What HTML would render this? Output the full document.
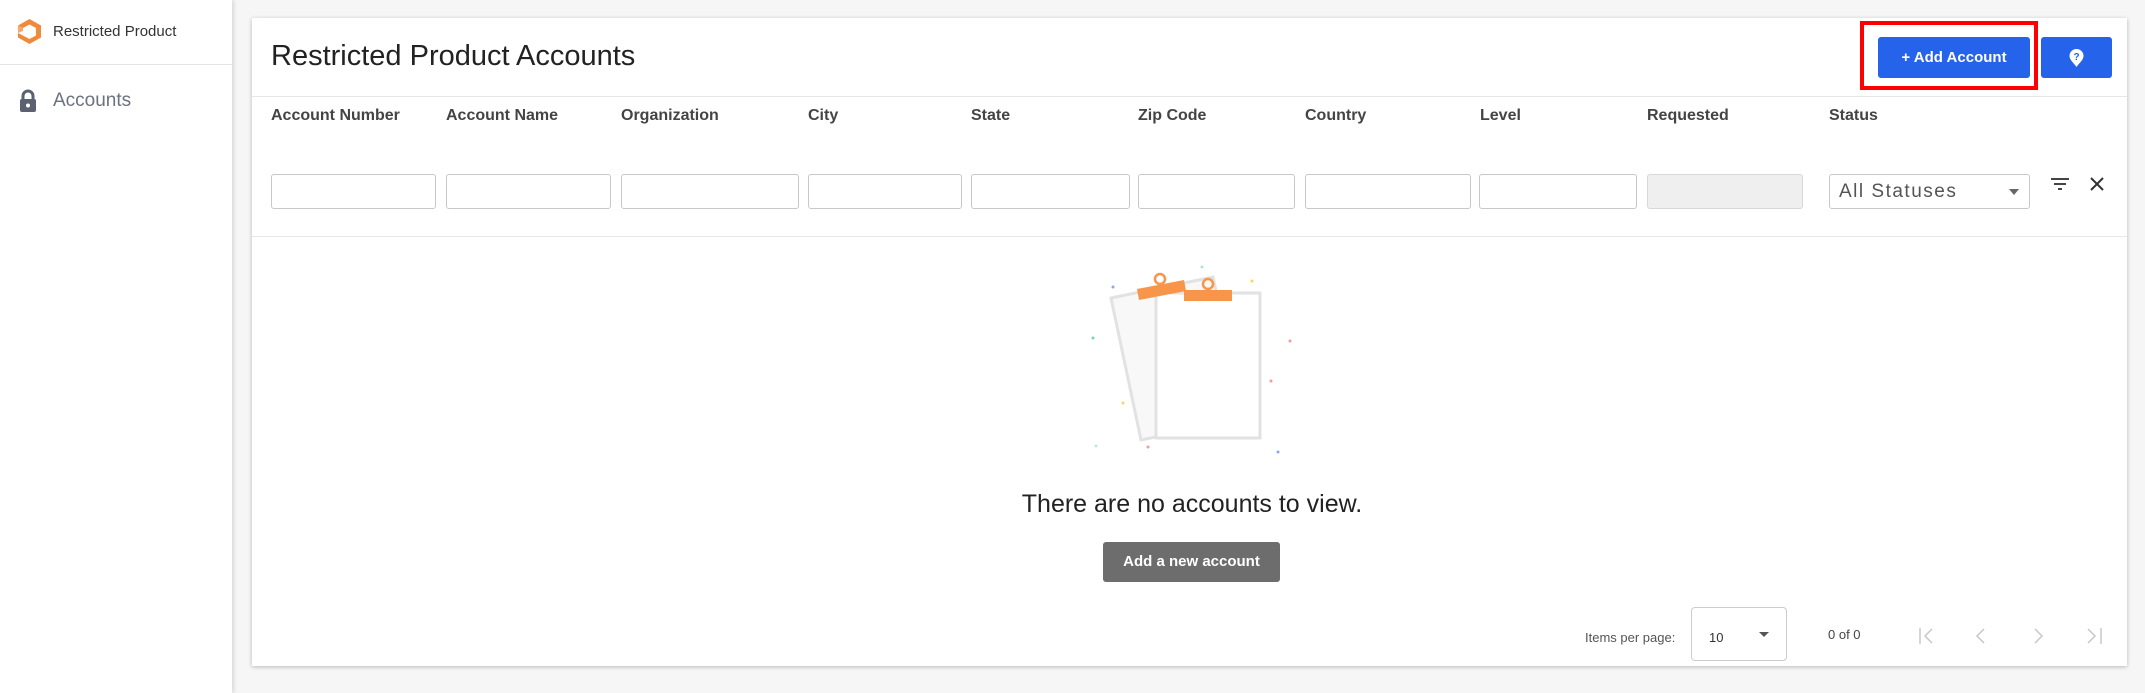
<!DOCTYPE html>
<html><head><meta charset="utf-8"><style>
*{box-sizing:border-box;margin:0;padding:0}
body{width:2145px;height:693px;background:#f6f6f6;font-family:"Liberation Sans",sans-serif;position:relative;overflow:hidden}
.abs{position:absolute}
.side{left:0;top:0;width:232px;height:693px;background:#fff;box-shadow:2px 0 4px rgba(0,0,0,.12)}
.card{left:252px;top:18px;width:1875px;height:648px;background:#fff;box-shadow:0 1px 4px rgba(0,0,0,.25)}
.lbl{font-size:16px;font-weight:bold;color:#444;top:107px}
.inp{top:174px;height:35px;border:1px solid #c8c8c8;border-radius:3px;background:#fff}
</style></head><body>
<div class="abs side">
  <svg class="abs" style="left:16px;top:18px" width="27" height="27" viewBox="0 0 27 27"><path d="M13.5 1 L25 7.5 L25 19.5 L13.5 26 L2 19.5 L2 15 L13.5 21 L20 17.5 L20 10 L13.5 6.5 L7 10 L2 7.5 Z" fill="#f08a3a"/><path d="M2 7.5 L7 10 L7 13 L2 15Z" fill="#f6a868"/></svg>
  <div class="abs" style="left:53px;top:23px;font-size:15px;color:#333">Restricted Product</div>
  <div class="abs" style="left:0;top:64px;width:232px;height:1px;background:#e4e4e4"></div>
  <svg class="abs" style="left:18px;top:89px" width="20" height="24" viewBox="0 0 20 24"><path d="M5 11V7a5 5 0 0 1 10 0v4" stroke="#5b6170" stroke-width="3" fill="none"/><rect x="2" y="10" width="16" height="13" rx="2" fill="#5b6170"/><circle cx="10" cy="16.5" r="2" fill="#fff"/></svg>
  <div class="abs" style="left:53px;top:90px;font-size:19px;color:#6b7280">Accounts</div>
</div>
<div class="abs card"></div>
<div class="abs" style="left:271px;top:40px;font-size:29px;color:#222">Restricted Product Accounts</div>
<div class="abs" style="left:1860px;top:21px;width:178px;height:69px;border:4px solid #f00"></div>
<div class="abs" style="left:1878px;top:37px;width:152px;height:41px;background:#2563eb;border-radius:3px;color:#fff;font-size:15px;font-weight:bold;text-align:center;line-height:41px">+ Add Account</div>
<div class="abs" style="left:2041px;top:37px;width:71px;height:41px;background:#2563eb;border-radius:3px"><svg class="abs" style="left:28px;top:12px" width="15" height="18" viewBox="0 0 15 18"><path d="M7.5 0a7 7 0 0 1 7 7c0 4-4 6.5-7 11C4.5 13.5.5 11 .5 7a7 7 0 0 1 7-7z" fill="#fff"/><text x="7.5" y="11" font-size="10" font-weight="bold" text-anchor="middle" fill="#2563eb" font-family="Liberation Sans">?</text></svg></div>
<div class="abs" style="left:252px;top:96px;width:1875px;height:1px;background:#e6e6e6"></div>
<div class="abs lbl" style="left:271px">Account Number</div>
<div class="abs lbl" style="left:446px">Account Name</div>
<div class="abs lbl" style="left:621px">Organization</div>
<div class="abs lbl" style="left:808px">City</div>
<div class="abs lbl" style="left:971px">State</div>
<div class="abs lbl" style="left:1138px">Zip Code</div>
<div class="abs lbl" style="left:1305px">Country</div>
<div class="abs lbl" style="left:1480px">Level</div>
<div class="abs lbl" style="left:1647px">Requested</div>
<div class="abs lbl" style="left:1829px">Status</div>
<div class="abs inp" style="left:271px;width:165px"></div>
<div class="abs inp" style="left:446px;width:165px"></div>
<div class="abs inp" style="left:621px;width:178px"></div>
<div class="abs inp" style="left:808px;width:154px"></div>
<div class="abs inp" style="left:971px;width:159px"></div>
<div class="abs inp" style="left:1138px;width:157px"></div>
<div class="abs inp" style="left:1305px;width:166px"></div>
<div class="abs inp" style="left:1479px;width:158px"></div>
<div class="abs inp" style="left:1647px;width:156px;background:#efefef;border-color:#d8d8d8"></div>
<div class="abs inp" style="left:1829px;width:201px;font-size:19px;letter-spacing:1.5px;color:#555;padding-left:9px;line-height:33px">All Statuses<span class="abs" style="right:10px;top:14px;border:5px solid transparent;border-top:6px solid #666"></span></div>
<svg class="abs" style="left:2050px;top:176px" width="20" height="16" viewBox="0 0 20 16"><path d="M1 3h18M4 8h12M8 13h4" stroke="#444" stroke-width="2"/></svg>
<svg class="abs" style="left:2089px;top:176px" width="16" height="16" viewBox="0 0 16 16"><path d="M2 2l12 12M14 2L2 14" stroke="#333" stroke-width="2"/></svg>
<div class="abs" style="left:252px;top:236px;width:1875px;height:1px;background:#e6e6e6"></div>
<svg class="abs" style="left:1080px;top:260px" width="230" height="200" viewBox="1080 260 230 200">
  <polygon points="1111,298 1213,277 1243,419 1141,440" fill="#f8f8f8" stroke="#e2e2e2" stroke-width="3"/>
  <rect x="1156" y="293" width="104" height="145" fill="#fff" stroke="#e2e2e2" stroke-width="3"/>
  <polygon points="1137,289 1184,280 1186,291 1139,300" fill="#f7954a"/>
  <circle cx="1160" cy="279" r="5" fill="none" stroke="#f7954a" stroke-width="2.5"/>
  <rect x="1184" y="290" width="48" height="11" fill="#f7954a"/>
  <circle cx="1208" cy="284" r="5" fill="none" stroke="#f7954a" stroke-width="2.5"/>
  <circle cx="1202" cy="267" r="1.5" fill="#a8e8d8"/>
  <circle cx="1093" cy="338" r="1.5" fill="#7ad8a8"/><circle cx="1252" cy="281" r="1.5" fill="#f6d860"/><circle cx="1290" cy="341" r="1.5" fill="#f49b9b"/>
  <circle cx="1271" cy="381" r="1.5" fill="#f49b9b"/><circle cx="1123" cy="403" r="1.5" fill="#f6d860"/><circle cx="1096" cy="446" r="1.5" fill="#b8ecd8"/>
  <circle cx="1148" cy="447" r="1.5" fill="#f49b9b"/><circle cx="1278" cy="452" r="1.5" fill="#8aa8f0"/><circle cx="1113" cy="287" r="1.5" fill="#8aa8f0"/>
</svg>
<div class="abs" style="left:942px;top:490px;width:500px;text-align:center;font-size:25px;color:#222">There are no accounts to view.</div>
<div class="abs" style="left:1103px;top:542px;width:177px;height:40px;background:#6d6d6d;border-radius:3px;color:#fff;font-size:15px;font-weight:bold;text-align:center;line-height:40px">Add a new account</div>
<div class="abs" style="left:1585px;top:630px;font-size:13px;color:#555">Items per page:</div>
<div class="abs" style="left:1691px;top:607px;width:96px;height:54px;border:1px solid #ccc;border-radius:4px;font-size:13px;color:#333;padding:22px 0 0 17px">10<span class="abs" style="left:67px;top:24px;border:5px solid transparent;border-top:5px solid #555"></span></div>
<div class="abs" style="left:1828px;top:627px;font-size:13px;color:#444">0 of 0</div>
<svg class="abs" style="left:1918px;top:626px" width="190" height="20" viewBox="0 0 190 20" fill="none" stroke="#c8c8c8" stroke-width="1.5"><path d="M2 2v16M14 3l-7 7 7 7"/><path d="M66 3l-7 7 7 7"/><path d="M117 3l7 7-7 7"/><path d="M170 3l7 7-7 7M183 2v16"/></svg>
</body></html>
